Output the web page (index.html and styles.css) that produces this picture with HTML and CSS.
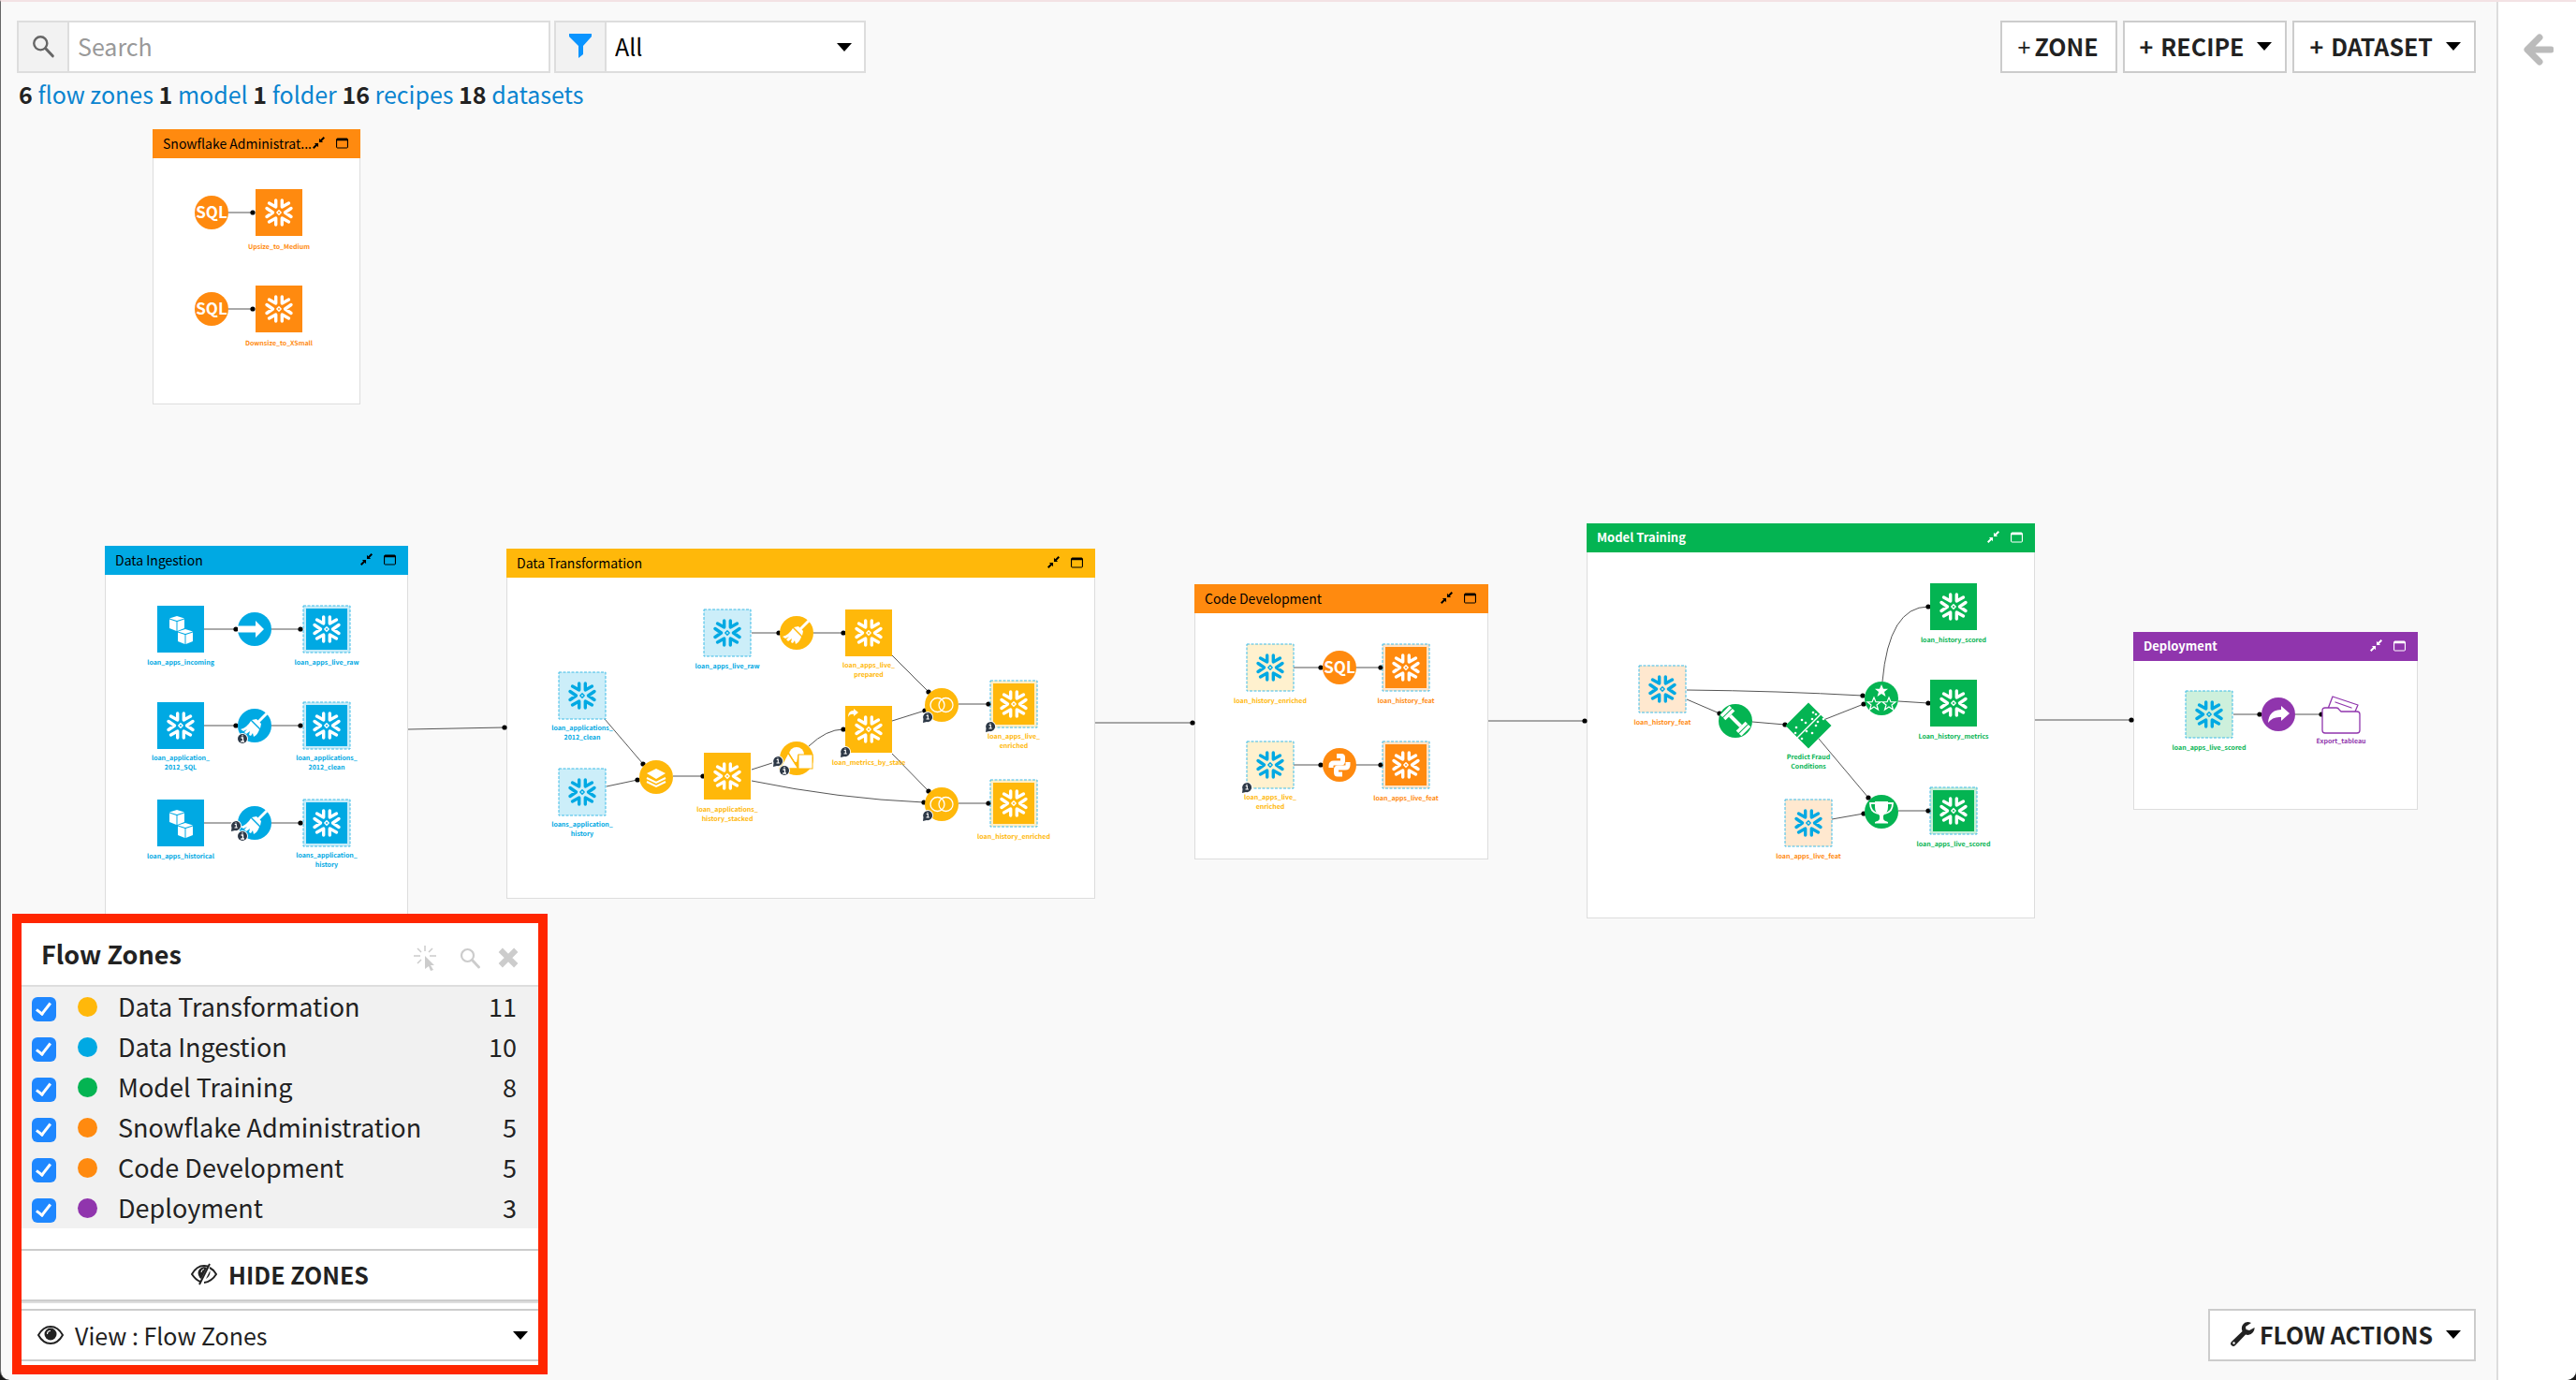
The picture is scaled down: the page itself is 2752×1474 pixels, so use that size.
FILE: index.html
```html
<!DOCTYPE html>
<html lang="en">
<head>
    <meta charset="UTF-8">
    <meta name="viewport" content="width=device-width, initial-scale=1.0">
    <title>Flow</title>
    <link rel="stylesheet" href="styles.css">
</head>
<body>
    <!-- Shared icons -->
    <svg class="sprite" aria-hidden="true">
        <defs>
            <marker id="dot" viewBox="0 0 6 6" refX="3" refY="3" markerWidth="6" markerHeight="6" markerUnits="userSpaceOnUse">
                <circle cx="3" cy="3" r="2.6" fill="#000"/>
            </marker>

            <g id="snow" fill="none" stroke-width="3.4" stroke-linecap="round" stroke-linejoin="round">
                <path d="M13 -4.500L6.500 0L13 4.500M-13 -4.500L-6.500 0L-13 4.500"/>
                <path d="M3.300 -13V-6L10.500 -10M-3.300 -13V-6L-10.500 -10"/>
                <path d="M3.300 13V6L10.500 10M-3.300 13V6L-10.500 10"/>
                <path d="M0 -2.2L2.2 0L0 2.2L-2.2 0Z" stroke-width="1.4"/>
            </g>

            <!-- Datasets -->
            <g id="dataset">
                <rect x="-25" y="-25" width="50" height="50" fill="currentColor"/>
                <use href="#snow" stroke="#fff"/>
            </g>
            <g id="dataset-shared">
                <rect x="-25" y="-25" width="50" height="50" fill="currentColor" fill-opacity=".22" stroke="#3dbbe6" stroke-dasharray="3 1.5"/>
                <rect x="-22" y="-22" width="44" height="44" fill="currentColor"/>
                <use href="#snow" stroke="#fff"/>
            </g>
            <g id="dataset-foreign">
                <rect x="-25" y="-25" width="50" height="50" fill="currentColor" fill-opacity=".2" stroke="#3dbbe6" stroke-dasharray="3 1.5"/>
                <use href="#snow" stroke="#00a9e3"/>
            </g>
            <g id="cube">
                <path d="M0 -8L8 -5.5L0 -3L-8 -5.5ZM-8 -4.5L-.5 -2V8L-8 5ZM8 -4.5L.5 -2V8L8 5Z"/>
            </g>
            <g id="dataset-s3">
                <rect x="-25" y="-25" width="50" height="50" fill="currentColor"/>
                <use href="#cube" fill="#fff" transform="translate(-4 -6)"/>
                <use href="#cube" fill="#fff" transform="translate(5 8)"/>
            </g>

            <!-- Recipes -->
            <g id="recipe-sync">
                <circle r="18" fill="currentColor"/>
                <path d="M-18 -3.5H1V-9L10 0L1 9V3.5H-18Z" fill="#fff"/>
            </g>
            <g id="recipe-prepare">
                <circle r="18" fill="currentColor"/>
                <path d="M13 -13L4 -4" stroke="#fff" stroke-width="3" fill="none"/>
                <path d="M-3 -6L2 -7L7 -2L6 3Z" fill="#fff"/>
                <path d="M-4 -5L5 4Q4 9 -1 12L-2 8L-4 11L-6 10L-5 6L-9 9L-11 7L-8 4L-12 6L-15 4Q-8 2 -4 -5Z" fill="#fff"/>
            </g>
            <g id="recipe-stack">
                <circle r="18" fill="currentColor"/>
                <path d="M0 -9L10 -4L0 2L-10 -4Z" fill="#fff"/>
                <path d="M-10 1L0 6L10 1M-10 5L0 10L10 5" fill="none" stroke="#fff" stroke-width="2"/>
            </g>
            <g id="recipe-join">
                <circle r="18" fill="currentColor"/>
                <circle cx="-4.5" r="7.5" fill="none" stroke="#fff" stroke-width="1.3"/>
                <circle cx="4.5" r="7.5" fill="none" stroke="#fff" stroke-width="1.3"/>
            </g>
            <g id="recipe-group">
                <circle r="18" fill="currentColor"/>
                <circle cx="0" cy="-4" r="8" fill="#fff"/>
                <path d="M-9 -6L2 11H-18Z" fill="#fff" stroke="currentColor" stroke-width="1.5"/>
                <path d="M-9 -6L0 8L2 -4L9 0V8H0Z" fill="currentColor" stroke="currentColor"/>
                <rect x="2" y="-4" width="15" height="15" fill="#fff" stroke="currentColor" stroke-width="1"/>
            </g>
            <g id="recipe-sql">
                <circle r="18" fill="currentColor"/>
                <text class="sql" y="6">SQL</text>
            </g>
            <g id="recipe-python">
                <circle r="18" fill="currentColor"/>
                <g fill="none" stroke="#fff" stroke-width="5" stroke-linejoin="round">
                    <path d="M-3 -9.500H2Q3.500 -9.500 3.500 -8V-4Q3.500 -2 1.500 -2H-6Q-9 -2 -9 1V3"/>
                    <path d="M3 10H-2Q-3.500 10 -3.500 8V5Q-3.500 3 -1.500 3H6Q9 3 9 0V-3"/>
                </g>
            </g>
            <g id="recipe-train">
                <circle r="18" fill="currentColor"/>
                <g transform="rotate(45)" fill="#fff">
                    <rect x="-8" y="-2" width="16" height="4"/>
                    <rect x="-11.5" y="-7" width="3.500" height="14"/>
                    <rect x="-16" y="-7" width="3.500" height="14"/>
                    <rect x="8" y="-7" width="3.500" height="14"/>
                    <rect x="12.5" y="-7" width="3.500" height="14"/>
                </g>
            </g>
            <path id="star" d="M0 -7L2 -2.300L7 -2.200L3 1L4.500 6L0 3L-4.500 6L-3 1L-7 -2.200L-2 -2.300Z"/>
            <g id="recipe-evaluate">
                <circle r="18" fill="currentColor"/>
                <use href="#star" y="-8" fill="#fff"/>
                <use href="#star" x="-8" y="6" fill="none" stroke="#fff" stroke-width="1.2"/>
                <use href="#star" x="8" y="6" fill="none" stroke="#fff" stroke-width="1.2"/>
            </g>
            <g id="recipe-score">
                <circle r="18" fill="currentColor"/>
                <path d="M-7 -11H7V-5Q7 1 2 4V7Q2 9.500 6 10.500Q7.500 11 7 12.500H-7Q-7.500 11 -6 10.500Q-2 9.500 -2 7V4Q-7 1 -7 -5Z" fill="#fff"/>
                <path d="M-7 -9H-12Q-12 0 -4 2M7 -9H12Q12 0 4 2" fill="none" stroke="#fff" stroke-width="1.800"/>
            </g>
            <g id="recipe-export">
                <circle r="18" fill="currentColor"/>
                <path d="M3 -9L12 -1L3 7V3Q-6 2 -11 9Q-10 -5 3 -5Z" fill="#fff"/>
            </g>

            <!-- Model and folder -->
            <g id="model">
                <path d="M0 -24.500L24.500 0L0 24.500L-24.500 0Z" fill="currentColor"/>
                <path d="M-12 13L13 -12" stroke="#fff" stroke-width="1.500"/>
                <g fill="#fff">
                    <circle cx="5" cy="-14" r="1.300"/><circle cx="8" cy="-12" r="1.300"/><circle cx="-7" cy="-6" r="1.300"/>
                    <circle cx="-3" cy="-3" r="1.300"/><circle cx="4" cy="-7" r="1.300"/><circle cx="-13" cy="2" r="1.300"/>
                    <circle cx="-14" cy="8" r="1.300"/><circle cx="-7" cy="14" r="1.300"/><circle cx="-2" cy="6" r="1.300"/>
                    <circle cx="4" cy="8" r="1.300"/><circle cx="8" cy="0" r="1.300"/><circle cx="10" cy="-4" r="1.300"/><circle cx="16" cy="-7" r="1.300"/>
                </g>
            </g>
            <g id="folder" fill="#fff" stroke="currentColor" stroke-width="1.300" stroke-linejoin="round">
                <path d="M-14 -6L-9 -19L18 -10L15 -3"/>
                <path d="M-6 -13L11 -7" stroke-linecap="round"/>
                <path d="M-20 -4Q-20 -7 -17 -7H-5Q-3 -7 -2 -5L0 -3H17Q20 -3 20 0V17Q20 20 17 20H-17Q-20 20 -20 17Z"/>
            </g>

            <!-- Badges -->
            <g id="info">
                <circle r="6" fill="#fff"/>
                <circle r="5" fill="#2e3947"/>
                <path d="M-1.500 -1H.5V3M-1.800 3H2M-.7 -3.200H.7" stroke="#fff" stroke-width="1.300" fill="none"/>
            </g>
            <g id="comment">
                <path d="M-6 7V0A6 6 0 1 1 0 6Z" fill="#fff"/>
                <path d="M-5 6L-4.500 2A5 5 0 1 1 -1 5Z" fill="#2e3947"/>
                <path d="M-1.300 -1.500H.3V2M-1.500 2H1.800M-.6 -3H.6" stroke="#fff" stroke-width="1.100" fill="none"/>
            </g>

            <!-- Interface icons -->
            <symbol id="i-search" viewBox="0 0 24 24">
                <circle cx="9.500" cy="9.500" r="6.500" fill="none" stroke="currentColor" stroke-width="2.200"/>
                <path d="M14.500 14.500L21.500 22" stroke="currentColor" stroke-width="2.800" stroke-linecap="round"/>
            </symbol>
            <symbol id="i-filter" viewBox="0 0 26 26">
                <path d="M1 0H25V3L16 13V22L11 26V13L1 3Z" fill="currentColor"/>
            </symbol>
            <symbol id="i-collapse" viewBox="0 0 14 14">
                <path d="M7.500 6.500V2L9 3.500L12.500 0L14 1.500L10.500 5L12 6.500ZM6.500 7.500V12L5 10.500L1.500 14L0 12.500L3.500 9L2 7.500Z" fill="currentColor"/>
            </symbol>
            <symbol id="i-window" viewBox="0 0 14 12">
                <path d="M1.500 0H12.500L14 1.500V10.500L12.500 12H1.500L0 10.500V1.500ZM1.200 3V10.800H12.800V3Z" fill="currentColor" fill-rule="evenodd"/>
            </symbol>
            <symbol id="i-click" viewBox="0 0 24 28">
                <path d="M12 1V7M0 12H7M17 12H24M4 4L8 8M20 4L16 8M4 20L8 16" stroke="currentColor" stroke-width="1.500"/>
                <path d="M12 12L22 22L18 22L21 27L18 28L16 23L12 26Z" fill="currentColor"/>
            </symbol>
            <symbol id="i-close" viewBox="0 0 20 20">
                <path d="M2.500 2.500L17.500 17.500M17.500 2.500L2.500 17.500" stroke="currentColor" stroke-width="5.500"/>
            </symbol>
            <symbol id="i-eye" viewBox="0 0 28 20">
                <path d="M1 10Q6 1 14 1Q22 1 27 10Q22 19 14 19Q6 19 1 10Z" fill="none" stroke="currentColor" stroke-width="2"/>
                <circle cx="14" cy="9" r="6.500" fill="currentColor"/>
                <path d="M10.500 9Q10.500 5.500 14 5.500" fill="none" stroke="#fff" stroke-width="1.200"/>
            </symbol>
            <symbol id="i-hide" viewBox="0 0 28 24">
                <path d="M10 20Q5 18 1 12Q6 3 14 3L18 3.500M20 5Q24 7 27 12Q22 20 14 21" fill="none" stroke="currentColor" stroke-width="2"/>
                <path d="M17 5A6.500 6.500 0 0 0 8 13Q9 16 11 17Z" fill="currentColor"/>
                <path d="M20 1L9 23" stroke="currentColor" stroke-width="2"/>
                <path d="M20.500 8Q21 14 16 17Z" fill="currentColor"/>
                <path d="M11 10Q11 7 14 6.500" fill="none" stroke="#fff"/>
            </symbol>
            <symbol id="i-wrench" viewBox="0 0 26 26">
                <path d="M22 1Q16 -1.500 13 3Q11 6 12.500 10L1 21Q-1 23.500 1 25Q3 27 5 25L16 13.500Q21 15 24 11Q26 8 25.500 6L20 9L16.500 8L16 5Z" fill="currentColor"/>
                <circle cx="3.500" cy="22.500" r="1.200" fill="#fff"/>
            </symbol>
            <symbol id="i-back" viewBox="0 0 32 34">
                <path d="M17 4L4 17L17 30M5 17H29" fill="none" stroke="currentColor" stroke-width="7" stroke-linecap="round" stroke-linejoin="round"/>
            </symbol>
        </defs>
    </svg>

    <div class="app">
        <main class="flow">
            <div class="canvas">
                <!-- Zones -->
                <section class="zone orange zone-admin">
                    <header>
                        <h2>Snowflake Administrat...</h2>
                        <button type="button" aria-label="Collapse"><svg width="13" height="13"><use href="#i-collapse"/></svg></button>
                        <button type="button" aria-label="Open zone"><svg width="13" height="12"><use href="#i-window"/></svg></button>
                    </header>
                </section>
                <section class="zone blue zone-ingestion">
                    <header>
                        <h2>Data Ingestion</h2>
                        <button type="button" aria-label="Collapse"><svg width="13" height="13"><use href="#i-collapse"/></svg></button>
                        <button type="button" aria-label="Open zone"><svg width="13" height="12"><use href="#i-window"/></svg></button>
                    </header>
                </section>
                <section class="zone yellow zone-transformation">
                    <header>
                        <h2>Data Transformation</h2>
                        <button type="button" aria-label="Collapse"><svg width="13" height="13"><use href="#i-collapse"/></svg></button>
                        <button type="button" aria-label="Open zone"><svg width="13" height="12"><use href="#i-window"/></svg></button>
                    </header>
                </section>
                <section class="zone orange zone-code">
                    <header>
                        <h2>Code Development</h2>
                        <button type="button" aria-label="Collapse"><svg width="13" height="13"><use href="#i-collapse"/></svg></button>
                        <button type="button" aria-label="Open zone"><svg width="13" height="12"><use href="#i-window"/></svg></button>
                    </header>
                </section>
                <section class="zone green light zone-training">
                    <header>
                        <h2>Model Training</h2>
                        <button type="button" aria-label="Collapse"><svg width="13" height="13"><use href="#i-collapse"/></svg></button>
                        <button type="button" aria-label="Open zone"><svg width="13" height="12"><use href="#i-window"/></svg></button>
                    </header>
                </section>
                <section class="zone purple light zone-deployment">
                    <header>
                        <h2>Deployment</h2>
                        <button type="button" aria-label="Collapse"><svg width="13" height="13"><use href="#i-collapse"/></svg></button>
                        <button type="button" aria-label="Open zone"><svg width="13" height="12"><use href="#i-window"/></svg></button>
                    </header>
                </section>

                <svg class="graph">
                    <!-- Links -->
                    <g class="edges">
                        <path d="M244 227H270"/>
                        <path d="M244 330H270"/>

                        <path d="M436 779L539 777"/>
                        <path d="M1170 772H1274"/>
                        <path d="M1590 770H1693"/>
                        <path d="M2174 769H2277"/>

                        <path d="M218 672H252"/>
                        <path d="M290 672H321"/>
                        <path d="M218 775H252"/>
                        <path d="M290 775H321"/>
                        <path d="M218 879H252"/>
                        <path d="M290 879H321"/>

                        <path d="M803 676H832"/>
                        <path d="M869 676H901"/>
                        <path d="M646 768L687 816"/>
                        <path d="M648 840L681 833"/>
                        <path d="M719 829H751"/>
                        <path d="M803 822L831 813"/>
                        <path d="M864 797Q883 779 901 779"/>
                        <path d="M953 770L988 759"/>
                        <path d="M953 700L992 739"/>
                        <path d="M953 805L992 845"/>
                        <path d="M803 834Q895 853 987 857"/>
                        <path d="M1024 752H1056"/>
                        <path d="M1024 858H1056"/>

                        <path d="M1382 713H1411"/>
                        <path d="M1449 713H1475"/>
                        <path d="M1382 817H1411"/>
                        <path d="M1449 817H1475"/>

                        <path d="M1802 737Q1900 738 1990 743"/>
                        <path d="M1802 747L1837 762"/>
                        <path d="M1872 771L1907 774"/>
                        <path d="M1948 769L1991 752"/>
                        <path d="M1943 789L1996 852"/>
                        <path d="M1957 875L1991 869"/>
                        <path d="M2028 866H2060"/>
                        <path d="M2028 749L2060 751"/>
                        <path d="M2011 728Q2018 648 2060 648"/>

                        <path d="M2386 763H2414"/>
                        <path d="M2452 763H2480"/>
                    </g>

                    <!-- Snowflake Administration -->
                    <g class="orange">
                        <use href="#recipe-sql" x="226" y="227"/>
                        <g transform="translate(298 227)"><use href="#dataset"/><text y="39">Upsize_to_Medium</text></g>
                        <use href="#recipe-sql" x="226" y="330"/>
                        <g transform="translate(298 330)"><use href="#dataset"/><text y="39">Downsize_to_XSmall</text></g>
                    </g>

                    <!-- Data Ingestion -->
                    <g class="blue">
                        <g transform="translate(193 672)"><use href="#dataset-s3"/><text y="38">loan_apps_incoming</text></g>
                        <use href="#recipe-sync" x="272" y="672"/>
                        <g transform="translate(349 672)"><use href="#dataset-shared"/><text y="38">loan_apps_live_raw</text></g>
                        <g transform="translate(193 775)"><use href="#dataset"/><text y="37">loan_application_<tspan x="0" dy="10">2012_SQL</tspan></text></g>
                        <use href="#recipe-prepare" x="272" y="775"/>
                        <g transform="translate(349 775)"><use href="#dataset-shared"/><text y="37">loan_applications_<tspan x="0" dy="10">2012_clean</tspan></text></g>
                        <g transform="translate(193 879)"><use href="#dataset-s3"/><text y="38">loan_apps_historical</text></g>
                        <use href="#recipe-prepare" x="272" y="879"/>
                        <g transform="translate(349 879)"><use href="#dataset-shared"/><text y="37">loans_application_<tspan x="0" dy="10">history</tspan></text></g>
                        <use href="#info" x="259" y="789"/>
                        <use href="#comment" x="252" y="882"/>
                        <use href="#info" x="259" y="893"/>
                    </g>

                    <!-- Data Transformation -->
                    <g class="blue">
                        <g transform="translate(777 676)"><use href="#dataset-foreign"/><text y="38">loan_apps_live_raw</text></g>
                        <g transform="translate(622 743)"><use href="#dataset-foreign"/><text y="37">loan_applications_<tspan x="0" dy="10">2012_clean</tspan></text></g>
                        <g transform="translate(622 846)"><use href="#dataset-foreign"/><text y="37">loans_application_<tspan x="0" dy="10">history</tspan></text></g>
                    </g>
                    <g class="yellow">
                        <use href="#recipe-prepare" x="851" y="676"/>
                        <g transform="translate(928 676)"><use href="#dataset"/><text y="37">loan_apps_live_<tspan x="0" dy="10">prepared</tspan></text></g>
                        <use href="#recipe-stack" x="701" y="830"/>
                        <g transform="translate(777 829)"><use href="#dataset"/><text y="38">loan_applications_<tspan x="0" dy="10">history_stacked</tspan></text></g>
                        <use href="#recipe-group" x="851" y="810"/>
                        <g transform="translate(928 779)"><use href="#dataset"/><text y="38">loan_metrics_by_state</text></g>
                        <path d="M906 766Q906 759 912 759V757L917 761L912 765V763Q908 762 906 766Z" fill="#fff"/>
                        <use href="#recipe-join" x="1006" y="753"/>
                        <use href="#recipe-join" x="1006" y="859"/>
                        <g transform="translate(1083 752)"><use href="#dataset-shared"/><text y="37">loan_apps_live_<tspan x="0" dy="10">enriched</tspan></text></g>
                        <g transform="translate(1083 858)"><use href="#dataset-shared"/><text y="38">loan_history_enriched</text></g>
                        <use href="#comment" x="991" y="766"/>
                        <use href="#comment" x="1058" y="776"/>
                        <use href="#comment" x="903" y="803"/>
                        <use href="#comment" x="831" y="813"/>
                        <use href="#info" x="838" y="823"/>
                        <use href="#comment" x="991" y="871"/>
                    </g>

                    <!-- Code Development -->
                    <g class="yellow">
                        <g transform="translate(1357 713)"><use href="#dataset-foreign"/><text y="38">loan_history_enriched</text></g>
                        <g transform="translate(1357 817)"><use href="#dataset-foreign"/><text y="37">loan_apps_live_<tspan x="0" dy="10">enriched</tspan></text></g>
                        <use href="#comment" x="1332" y="841"/>
                    </g>
                    <g class="orange">
                        <use href="#recipe-sql" x="1431" y="713"/>
                        <g transform="translate(1502 713)"><use href="#dataset-shared"/><text y="38">loan_history_feat</text></g>
                        <use href="#recipe-python" x="1431" y="817"/>
                        <g transform="translate(1502 817)"><use href="#dataset-shared"/><text y="38">loan_apps_live_feat</text></g>
                    </g>

                    <!-- Model Training -->
                    <g class="orange">
                        <g transform="translate(1776 736)"><use href="#dataset-foreign"/><text y="38">loan_history_feat</text></g>
                        <g transform="translate(1932 879)"><use href="#dataset-foreign"/><text y="38">loan_apps_live_feat</text></g>
                    </g>
                    <g class="green">
                        <use href="#recipe-train" x="1854" y="770"/>
                        <g transform="translate(1932 775)"><use href="#model"/><text y="36">Predict Fraud<tspan x="0" dy="10">Conditions</tspan></text></g>
                        <use href="#recipe-evaluate" x="2010" y="746"/>
                        <use href="#recipe-score" x="2010" y="867"/>
                        <g transform="translate(2087 648)"><use href="#dataset"/><text y="38">loan_history_scored</text></g>
                        <g transform="translate(2087 751)"><use href="#dataset"/><text y="38">Loan_history_metrics</text></g>
                        <g transform="translate(2087 866)"><use href="#dataset-shared"/><text y="38">loan_apps_live_scored</text></g>
                    </g>

                    <!-- Deployment -->
                    <g class="green">
                        <g transform="translate(2360 763)"><use href="#dataset-foreign"/><text y="38">loan_apps_live_scored</text></g>
                    </g>
                    <g class="purple">
                        <use href="#recipe-export" x="2434" y="763"/>
                        <g transform="translate(2501 763)"><use href="#folder"/><text y="31">Export_tableau</text></g>
                    </g>
                </svg>
            </div>

            <div class="toolbar">
                <div class="filters">
                    <div class="field search">
                        <label for="search" aria-label="Search"><svg width="26" height="26"><use href="#i-search"/></svg></label>
                        <input type="text" id="search" placeholder="Search">
                    </div>
                    <div class="field type">
                        <label for="type" aria-label="Filter"><svg width="26" height="26"><use href="#i-filter"/></svg></label>
                        <select id="type">
                            <option>All</option>
                        </select>
                        <span class="caret"></span>
                    </div>
                </div>
                <div class="actions">
                    <button type="button" class="btn tight"><span>+</span>ZONE</button>
                    <button type="button" class="btn"><span>+</span>RECIPE <i class="caret"></i></button>
                    <button type="button" class="btn"><span>+</span>DATASET <i class="caret"></i></button>
                </div>
            </div>
            <p class="summary"><b>6</b> <a href="#">flow zones</a> <b>1</b> <a href="#">model</a> <b>1</b> <a href="#">folder</a> <b>16</b> <a href="#">recipes</a> <b>18</b> <a href="#">datasets</a></p>

            <div class="panel">
                <header>
                    <h1>Flow Zones</h1>
                    <button type="button" aria-label="Select"><svg width="24" height="28"><use href="#i-click"/></svg></button>
                    <button type="button" aria-label="Search zones"><svg width="24" height="24"><use href="#i-search"/></svg></button>
                    <button type="button" aria-label="Close"><svg width="22" height="22"><use href="#i-close"/></svg></button>
                </header>
                <ul>
                    <li><input type="checkbox" id="z1" checked><i class="swatch yellow"></i><label for="z1">Data Transformation</label><span>11</span></li>
                    <li><input type="checkbox" id="z2" checked><i class="swatch blue"></i><label for="z2">Data Ingestion</label><span>10</span></li>
                    <li><input type="checkbox" id="z3" checked><i class="swatch green"></i><label for="z3">Model Training</label><span>8</span></li>
                    <li><input type="checkbox" id="z4" checked><i class="swatch orange"></i><label for="z4">Snowflake Administration</label><span>5</span></li>
                    <li><input type="checkbox" id="z5" checked><i class="swatch orange"></i><label for="z5">Code Development</label><span>5</span></li>
                    <li><input type="checkbox" id="z6" checked><i class="swatch purple"></i><label for="z6">Deployment</label><span>3</span></li>
                </ul>
                <button type="button" class="hide"><svg width="28" height="24"><use href="#i-hide"/></svg>HIDE ZONES</button>
                <button type="button" class="view"><svg width="28" height="20"><use href="#i-eye"/></svg>View : Flow Zones <i class="caret"></i></button>
            </div>

            <button type="button" class="btn flow-actions"><svg width="26" height="26"><use href="#i-wrench"/></svg>FLOW ACTIONS <i class="caret"></i></button>
        </main>
        <aside class="sidebar">
            <button type="button" aria-label="Open panel"><svg width="32" height="34"><use href="#i-back"/></svg></button>
        </aside>
    </div>
</body>
</html>
```

FILE: styles.css
```css
* {
    box-sizing: border-box;
}
html {
    background-color: #1a1a1a;
}
body {
    margin: 0;
    font-family: "Noto Sans CJK JP", "Noto Sans", sans-serif;
    font-size: 25px;
    line-height: 36px;
    color: #222;
}
h1, h2, p, ul {
    margin: 0;
    padding: 0;
}
button, input, select {
    font: inherit;
    color: inherit;
}
button {
    padding: 0;
    border: none;
    background: none;
    cursor: pointer;
}
svg {
    display: block;
    flex: none;
}
.sprite {
    position: absolute;
    width: 0;
    height: 0;
}
.blue { color: #00a9e3; }
.yellow { color: #ffb80a; }
.orange { color: #ff8a0f; }
.green { color: #04b452; }
.purple { color: #9035ad; }

/* Page */
.app {
    display: flex;
    min-height: 100vh;
    border-top: 2px solid #f3e2e4;
    border-left: 1px solid #666;
    border-radius: 0 0 10px 10px;
    background-color: #f9f9f9;
    overflow: hidden;
}
.flow {
    position: relative;
    flex: 1;
    overflow: hidden;
}
.sidebar {
    width: 85px;
    border-left: 2px solid #ddd;
    background-color: #fff;
    padding: 34px 0 0 27px;
}
.sidebar button {
    color: #bbb;
}

/* Toolbar */
.toolbar {
    position: relative;
    display: flex;
    justify-content: space-between;
    padding: 20px 22px 0 17px;
}
.filters {
    display: flex;
    gap: 4px;
}
.actions {
    display: flex;
    gap: 6px;
}
.field {
    position: relative;
    display: flex;
    height: 56px;
    border: 2px solid #ddd;
    background-color: #fff;
}
.search {
    width: 570px;
}
.type {
    width: 333px;
}
.field label {
    display: flex;
    align-items: center;
    justify-content: center;
    width: 54px;
    padding-bottom: 2px;
    border-right: 2px solid #ddd;
    background-color: #f2f2f2;
    color: #666;
}
.type label {
    color: #0a94ff;
}
.field input, .field select {
    flex: 1;
    min-width: 0;
    padding: 0 9px 2px;
    border: none;
    background: none;
    appearance: none;
    outline: none;
    color: #000;
}
.field input::placeholder {
    color: #999;
}
.caret {
    width: 0;
    height: 0;
    border: 8px solid transparent;
    border-top: 9px solid #000;
    border-bottom: 0;
}
.field .caret {
    position: absolute;
    right: 13px;
    top: 22px;
}
.btn {
    display: flex;
    align-items: center;
    height: 56px;
    padding: 0 14px 2px 16px;
    border: 2px solid #ccc;
    background-color: #fff;
    font-weight: 600;
}
.btn span {
    margin-right: 8px;
}
.btn.tight {
    padding: 0 18px 2px 17px;
}
.btn.tight span {
    margin-right: 4px;
    font-weight: 400;
}
.btn .caret {
    margin-left: 14px;
}
.flow-actions {
    position: absolute;
    right: 22px;
    bottom: 20px;
    padding-left: 22px;
}
.flow-actions svg {
    margin-right: 5px;
}
.summary {
    position: relative;
    padding: 4px 19px;
}
a {
    color: #0a84d0;
    text-decoration: none;
}

/* Canvas */
.canvas {
    position: absolute;
    top: -2px;
    left: -1px;
    right: 0;
    bottom: 0;
}
.zone {
    position: absolute;
    border: 1px solid #ddd;
    border-top: none;
    background-color: #fff;
}
.zone header {
    display: flex;
    align-items: center;
    gap: 12px;
    height: 31px;
    margin: 0 -1px;
    padding: 0 13px 2px 11px;
    background-color: currentColor;
}
.zone h2 {
    flex: 1;
    margin-right: -12px;
    white-space: nowrap;
    font-size: 14px;
    line-height: 20px;
    font-weight: 400;
    color: #000;
}
.zone button {
    color: #000;
}
.zone.light h2 {
    font-size: 13px;
    font-weight: 600;
    color: #fff;
}
.zone.light button {
    color: #fff;
}
.zone-admin {
    left: 163px;
    top: 138px;
    width: 222px;
    height: 294px;
}
.zone-ingestion {
    left: 112px;
    top: 583px;
    width: 324px;
    height: 407px;
}
.zone-transformation {
    left: 541px;
    top: 586px;
    width: 629px;
    height: 374px;
}
.zone-code {
    left: 1276px;
    top: 624px;
    width: 314px;
    height: 294px;
}
.zone-training {
    left: 1695px;
    top: 559px;
    width: 479px;
    height: 422px;
}
.zone-deployment {
    left: 2279px;
    top: 675px;
    width: 304px;
    height: 190px;
}
.graph {
    position: absolute;
    top: 0;
    left: 0;
    width: 100%;
    height: 100%;
    pointer-events: none;
}
.graph text {
    font-size: 7px;
    font-weight: 700;
    text-anchor: middle;
    text-rendering: geometricPrecision;
    fill: currentColor;
}
.edges path {
    fill: none;
    stroke: #555;
    marker-end: url(#dot);
}
.graph .sql, .sql {
    font-size: 17px;
    font-weight: 700;
    text-anchor: middle;
    fill: #fff;
}

/* Flow zones panel */
.panel {
    position: absolute;
    left: 12px;
    bottom: 6px;
    width: 572px;
    border: 10px solid #ff2600;
    background-color: #fff;
}
.panel header {
    display: flex;
    align-items: center;
    height: 68px;
    padding: 0 21px;
    border-bottom: 2px solid #ddd;
}
.panel h1 {
    flex: 1;
    font-size: 27px;
    line-height: 36px;
    font-weight: 600;
}
.panel header button {
    margin: 8px 0 0 18px;
    color: #ccc;
}
.panel header button:nth-of-type(2) {
    margin-left: 24px;
}
.panel ul {
    list-style: none;
    margin-bottom: 22px;
    background-color: #f1f1f1;
}
.panel li {
    display: flex;
    align-items: center;
    height: 43px;
    padding: 0 23px 1px 11px;
    font-size: 27px;
}
.panel li label {
    flex: 1;
}
.panel input {
    position: relative;
    width: 26px;
    height: 26px;
    margin: 6px 0 0;
    border-radius: 6px;
    background-color: #1e87ff;
    appearance: none;
}
.panel input:checked::after {
    content: "";
    position: absolute;
    left: 8px;
    top: 3px;
    width: 6px;
    height: 13px;
    border: solid #fff;
    border-width: 0 3px 3px 0;
    transform: rotate(38deg);
}
.swatch {
    width: 21px;
    height: 21px;
    margin: 0 22px 0 23px;
    border-radius: 50%;
    background-color: currentColor;
}
.hide, .view {
    display: flex;
    align-items: center;
    width: 100%;
    height: 56px;
    padding-bottom: 2px;
    border-top: 2px solid #ccc;
    border-bottom: 2px solid #ccc;
}
.hide {
    justify-content: center;
    gap: 12px;
    font-weight: 600;
    box-shadow: 0 2px #ddd;
}
.view {
    gap: 12px;
    margin: 8px 0 4px;
    padding: 0 11px 0 17px;
}
.view .caret {
    margin-left: auto;
}
```
